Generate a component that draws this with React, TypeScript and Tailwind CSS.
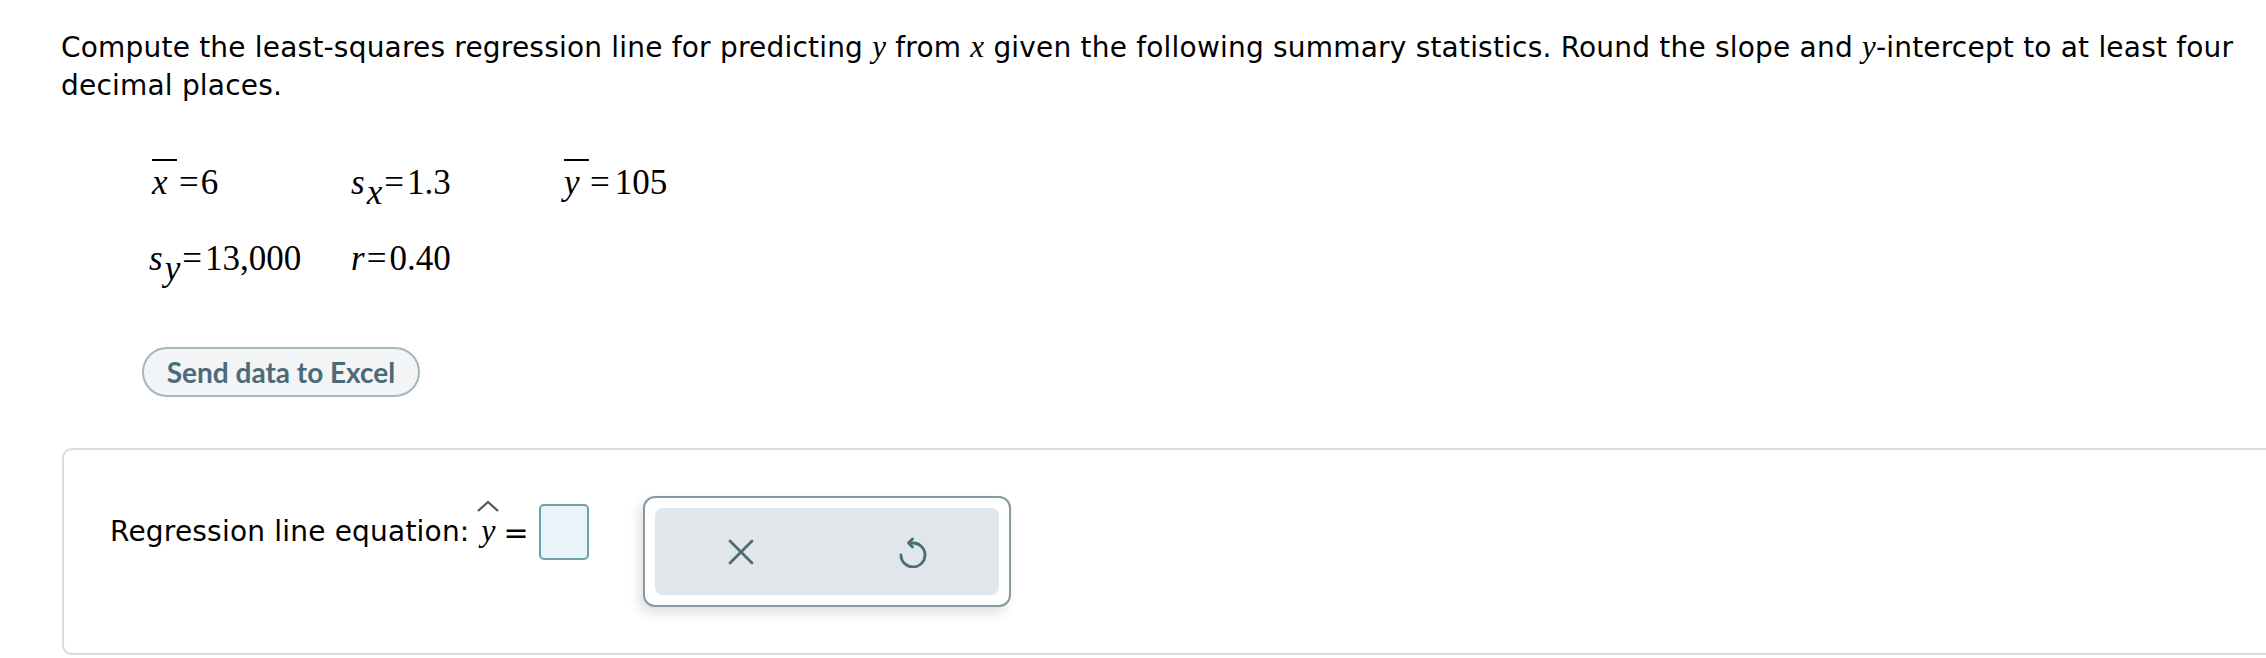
import React from 'react';

function Bar({ children, width }: { children: React.ReactNode; width: string }) {
  return <span className={`inline-block border-t-2 border-black pt-1 leading-none ${width}`}>{children}</span>;
}

function XIcon() {
  return (
    <svg width="26" height="26" viewBox="0 0 26 26" fill="none" stroke="#4a6b78" strokeWidth="2.8" strokeLinecap="round">
      <path d="M2 2L24 24M24 2L2 24" />
    </svg>
  );
}

function UndoIcon() {
  return (
    <svg width="30" height="32" viewBox="0 0 30 32" fill="none" stroke="#4a6b78" strokeWidth="2.8" strokeLinecap="round" strokeLinejoin="round">
      <path d="M3 19A12 12 0 1 0 14 7.05" />
      <path d="M14.5 3L10.5 7L14.5 11" />
    </svg>
  );
}

export default function App() {
  return (
    <div className="w-[2266px] h-[658px] overflow-hidden bg-white text-black">
      <p className="pt-[28px] pl-[61px] font-['DejaVu_Sans',Verdana,sans-serif] text-[28px] tracking-[0.2px] leading-[38px]">
        Compute the least-squares regression line for predicting{' '}
        <span className="font-['Liberation_Serif',serif] italic text-[31px]">y</span> from{' '}
        <span className="font-['Liberation_Serif',serif] italic text-[31px]">x</span> given the following summary
        statistics. Round the slope and <span className="font-['Liberation_Serif',serif] italic text-[31px]">y</span>
        -intercept to at least four decimal places.
      </p>

      <div className="mt-[54px] ml-[149px] font-['Liberation_Serif',serif] text-[35px] leading-[40px]">
        <div className="flex items-baseline">
          <div className="w-[202px] pl-[3px] flex items-baseline">
            <Bar width="w-[25px]">
              <span className="italic">x</span>
            </Bar>
            <span className="ml-[2px]">=</span>
            <span className="ml-[2px]">6</span>
          </div>
          <div className="w-[213px] flex items-baseline">
            <span className="italic">s</span>
            <span className="italic translate-y-[10px] ml-[2px]">x</span>
            <span className="ml-[2px]">=</span>
            <span className="ml-[3px]">1.3</span>
          </div>
          <div className="flex items-baseline">
            <Bar width="w-[25px]">
              <span className="italic">y</span>
            </Bar>
            <span className="ml-[1px]">=</span>
            <span className="ml-[5px]">105</span>
          </div>
        </div>
        <div className="flex items-baseline mt-[36px]">
          <div className="w-[202px] flex items-baseline">
            <span className="italic">s</span>
            <span className="italic translate-y-[10px] ml-[2px]">y</span>
            <span className="ml-[2px]">=</span>
            <span className="ml-[3px]">13,000</span>
          </div>
          <div className="flex items-baseline">
            <span className="italic">r</span>
            <span className="ml-[2px]">=</span>
            <span className="ml-[3px]">0.40</span>
          </div>
        </div>
      </div>

      <button className="mt-[68px] ml-[142px] w-[278px] h-[50px] rounded-full border-2 border-[#a5b6bf] bg-[#f2f4f6] font-['Lato',sans-serif] font-bold text-[28px] text-[#4c6b78] flex items-center justify-center">
        Send data to Excel
      </button>

      <div className="mt-[51px] ml-[62px] w-[2250px] h-[207px] border-2 border-[#d7dce0] rounded-[10px] pt-[46px] pl-[46px] flex items-start">
        <div className="mt-[8px] h-[56px] flex items-center">
          <span className="font-['DejaVu_Sans',Verdana,sans-serif] text-[28px] tracking-[0.2px]">Regression line equation:</span>
          <span className="ml-[7px] -mt-[18px] inline-flex flex-col items-center">
            <svg width="24" height="12" viewBox="0 0 24 12" fill="none" stroke="#555" strokeWidth="2.2" strokeLinejoin="round">
              <path d="M2 11L12 2L22 11" />
            </svg>
            <span className="mt-[2px] font-['Liberation_Serif',serif] italic text-[32px] leading-none">y</span>
          </span>
          <span className="ml-[3px] font-['DejaVu_Sans',sans-serif] text-[30px]">=</span>
          <span className="ml-[10px] w-[50px] h-[56px] border-2 border-[#6d9fae] bg-[#e8f4f9] rounded-[5px]" />
        </div>
        <div className="ml-[54px] w-[368px] h-[111px] border-2 border-[#8799a2] rounded-[12px] bg-white p-[10px] shadow-[-4px_6px_12px_rgba(0,0,0,0.12)]">
          <div className="h-full rounded-[8px] bg-[#e0e6e9] grid grid-cols-2 place-items-center">
            <XIcon />
            <UndoIcon />
          </div>
        </div>
      </div>
    </div>
  );
}
